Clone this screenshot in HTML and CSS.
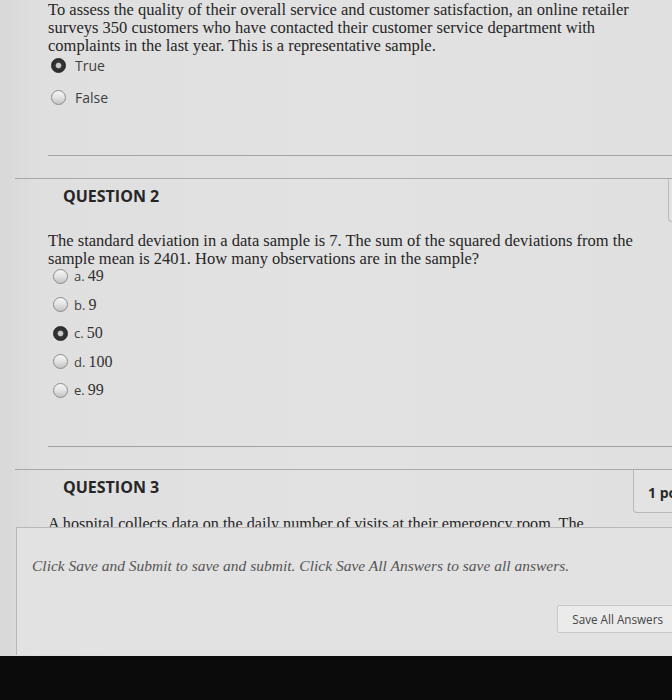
FILE: index.html
```html
<!DOCTYPE html>
<html lang="en">
<head>
<meta charset="utf-8">
<title>Take Test</title>
<link rel="stylesheet" href="styles.css">
</head>
<body>
<div class="screen">
  <main class="content">
    <section class="question question-partial">
      <div class="question-body">
        <p class="question-text">To assess the quality of their overall service and customer satisfaction, an online retailer<br>surveys 350 customers who have contacted their customer service department with<br>complaints in the last year. This is a representative sample.</p>
        <ul class="options options-tf">
          <li class="option"><span class="radio checked"></span><span class="label">True</span></li>
          <li class="option"><span class="radio"></span><span class="label">False</span></li>
        </ul>
      </div>
    </section>

    <section class="question">
      <header class="question-header">
        <h2 class="question-title">QUESTION 2</h2>
        <div class="points points-far">1 points</div>
      </header>
      <div class="question-body">
        <p class="question-text">The standard deviation in a data sample is 7. The sum of the squared deviations from the<br>sample mean is 2401. How many observations are in the sample?</p>
        <ul class="options options-mc">
          <li class="option"><span class="radio"></span><span class="letter">a.</span><span class="answer">49</span></li>
          <li class="option"><span class="radio"></span><span class="letter">b.</span><span class="answer">9</span></li>
          <li class="option"><span class="radio checked"></span><span class="letter">c.</span><span class="answer">50</span></li>
          <li class="option"><span class="radio"></span><span class="letter">d.</span><span class="answer">100</span></li>
          <li class="option"><span class="radio"></span><span class="letter">e.</span><span class="answer">99</span></li>
        </ul>
      </div>
    </section>

    <section class="question">
      <header class="question-header">
        <h2 class="question-title">QUESTION 3</h2>
        <div class="points">1 points</div>
      </header>
      <div class="question-body">
        <p class="question-text question-text-under">A hospital collects data on the daily number of visits at their emergency room. The</p>
      </div>
    </section>

    <div class="submit-bar">
      <p class="submit-note">Click Save and Submit to save and submit. Click Save All Answers to save all answers.</p>
      <div class="submit-actions">
        <button class="btn-save" type="button">Save All Answers</button>
      </div>
    </div>
  </main>
  <div class="bezel"></div>
</div>
</body>
</html>
```

FILE: styles.css
```css
html, body {
  margin: 0;
  padding: 0;
  height: 700px;
  overflow: hidden;
}

body {
  background: #0b0b0b;
  font-family: "Liberation Serif", "Times New Roman", serif;
  color: #262626;
}

.screen {
  display: flex;
  flex-direction: column;
  height: 700px;
}

.content {
  position: relative;
  height: 656px;
  overflow: hidden;
  background: linear-gradient(90deg, #d8d8d8 0, #dfdfdf 40px, #e2e2e2 50%, #e0e0e0 100%);
}

.question {
  margin-left: 15px;
  border-top: 1px solid #a9a9a9;
  margin-bottom: 22px;
}

.question-partial {
  border-top: none;
}

.question-header {
  display: flex;
  justify-content: space-between;
  align-items: flex-start;
  height: 43px;
}

.question-title {
  margin: 0;
  padding: 6px 0 0 48px;
  font-family: "Open Sans", "Liberation Sans", sans-serif;
  font-weight: 700;
  font-size: 16px;
  line-height: 22px;
  color: #262626;
}

.points {
  box-sizing: border-box;
  width: 80px;
  height: 43px;
  margin-right: -41px;
  padding: 14px 0 0 14px;
  border: 1px solid #b9b9b9;
  border-top: none;
  border-bottom-left-radius: 4px;
  background: #e3e3e3;
  font-family: "Open Sans", "Liberation Sans", sans-serif;
  font-weight: 700;
  font-size: 14px;
  line-height: 18px;
  color: #2a2a2a;
  white-space: nowrap;
}

.points-far {
  margin-right: -76px;
}

.question-body {
  margin-left: 33px;
  padding-bottom: 46px;
  border-bottom: 1px solid #a4a4a4;
}

.question-partial .question-body {
  padding-bottom: 48px;
}

.question-text {
  margin: 10px 0 0;
  font-size: 16.5px;
  line-height: 18px;
  color: #262626;
  white-space: nowrap;
}

.question-partial .question-text {
  margin-top: 1px;
}

.question-text-under {
  margin-top: 2px;
  font-size: 16.2px;
}

.options {
  list-style: none;
  margin: 0;
  padding: 0;
  display: flex;
  flex-direction: column;
}

.options-tf {
  margin-top: 0;
  padding-left: 3px;
  gap: 12px;
}

.options-mc {
  margin-top: -2px;
  padding-left: 5px;
  gap: 8.5px;
}

.option {
  display: flex;
  align-items: center;
  height: 20px;
}

.radio {
  box-sizing: border-box;
  width: 15px;
  height: 15px;
  border-radius: 50%;
  border: 1px solid #8c8c8c;
  background: linear-gradient(180deg, #f6f6f6 0%, #e2e2e2 50%, #c2c2c2 100%);
  flex: none;
}

.radio.checked {
  border-color: #262626;
  background: radial-gradient(circle, #d4d4d4 0, #c2c2c2 2.4px, #333 3.3px, #2a2a2a 100%);
}

.options-tf .label {
  margin-left: 9px;
  font-family: "Open Sans", "Liberation Sans", sans-serif;
  font-size: 14px;
  color: #404040;
}

.options-mc .letter {
  margin-left: 6px;
  font-family: "Open Sans", "Liberation Sans", sans-serif;
  font-size: 13px;
  color: #404040;
}

.options-mc .answer {
  margin-left: 3px;
  font-size: 16px;
  color: #303030;
}

.submit-bar {
  position: absolute;
  left: 16px;
  right: 0;
  bottom: 1px;
  height: 128px;
  box-sizing: border-box;
  border-top: 1px solid #b8b8b8;
  border-left: 1px solid #b8b8b8;
  background: #e2e2e2;
  padding: 28px 0 0 15px;
}

.submit-note {
  margin: 0;
  font-style: italic;
  font-size: 15.5px;
  line-height: 20px;
  color: #555;
  white-space: nowrap;
}

.submit-actions {
  display: flex;
  justify-content: flex-end;
  margin-top: 29px;
  margin-right: -6px;
}

.btn-save {
  height: 28px;
  padding: 0 14px;
  border: 1px solid #c9c9c9;
  border-radius: 2px;
  background: #ebebeb;
  font-family: "Open Sans", "Liberation Sans", sans-serif;
  font-size: 11.7px;
  color: #454545;
}

.bezel {
  height: 44px;
  background: #0b0b0b;
}
```
